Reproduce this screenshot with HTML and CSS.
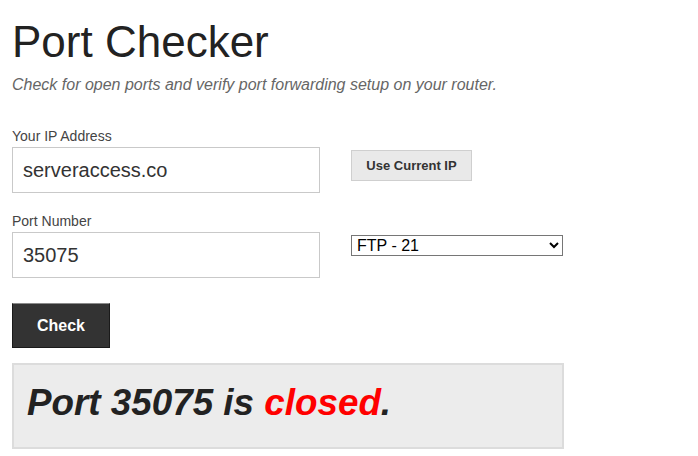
FILE: index.html
```html
<!DOCTYPE html>
<html lang="en">
<head>
<meta charset="utf-8">
<title>Port Checker</title>
<link rel="stylesheet" href="styles.css">
</head>
<body>
<main class="page">
  <h1 class="title">Port Checker</h1>
  <p class="subtitle">Check for open ports and verify port forwarding setup on your router.</p>

  <form class="form">
    <div class="row">
      <div class="field">
        <label class="label" for="ip">Your IP Address</label>
        <input class="text-input" id="ip" type="text" value="serveraccess.co">
      </div>
      <div class="side">
        <button type="button" class="btn-light">Use Current IP</button>
      </div>
    </div>
    <div class="row">
      <div class="field">
        <label class="label" for="port">Port Number</label>
        <input class="text-input" id="port" type="text" value="35075">
      </div>
      <div class="side">
        <select class="select">
          <option>FTP - 21</option>
          <option>SSH - 22</option>
          <option>HTTP - 80</option>
        </select>
      </div>
    </div>
    <button type="button" class="btn-dark">Check</button>
  </form>

  <div class="result">
    <h2 class="result-text">Port 35075 is <span class="closed">closed</span>.</h2>
  </div>
</main>
</body>
</html>
```
FILE: styles.css
```css
* { box-sizing: border-box; }

html, body {
  margin: 0;
  padding: 0;
  background: #fff;
}

body {
  font-family: "Liberation Sans", Arial, sans-serif;
  color: #222;
}

.page {
  padding: 17px 12px 0 12px;
}

.title {
  margin: 0;
  font-size: 44px;
  font-weight: normal;
  line-height: 50.6px;
  color: #222;
}

.subtitle {
  margin: 8px 0 0 0;
  font-size: 16px;
  line-height: 18.4px;
  font-style: italic;
  color: #666;
}

.form {
  margin-top: 34px;
  display: flex;
  flex-direction: column;
  align-items: flex-start;
}

.row {
  display: flex;
  align-items: flex-start;
  gap: 31px;
  margin-bottom: 20px;
}

.row + .row {
  margin-bottom: 25px;
}

.field {
  display: flex;
  flex-direction: column;
  gap: 3px;
  width: 308px;
}

.label {
  font-size: 14px;
  line-height: 16px;
  color: #444;
}

.text-input {
  width: 308px;
  height: 46px;
  margin: 0;
  padding: 0 10px;
  border: 1px solid #c9c9c9;
  border-radius: 0;
  font-family: "Liberation Sans", Arial, sans-serif;
  font-size: 20px;
  color: #333;
  background: #fff;
  outline: none;
}

.side {
  padding-top: 22px;
}

.btn-light {
  width: 121px;
  height: 31px;
  margin: 0;
  padding: 0;
  border: 1px solid #cfcfcf;
  border-radius: 0;
  background: #e9e9e9;
  font-family: "Liberation Sans", Arial, sans-serif;
  font-size: 13px;
  font-weight: bold;
  color: #333;
}

.select {
  width: 212px;
  height: 21px;
  margin: 0;
  padding: 0 0 0 1px;
  border: 1px solid #767676;
  border-radius: 0;
  background: #fff;
  font-family: "Liberation Sans", Arial, sans-serif;
  font-size: 16px;
  color: #000;
}

.btn-dark {
  width: 98px;
  height: 45px;
  margin: 0;
  padding: 0;
  border: 1px solid #1a1a1a;
  border-top-color: #8a8a8a;
  border-radius: 0;
  background: #333;
  font-family: "Liberation Sans", Arial, sans-serif;
  font-size: 16px;
  font-weight: bold;
  color: #fff;
}

.result {
  margin-top: 15px;
  width: 552px;
  height: 86px;
  padding: 17px 12px 0 13px;
  background: #ececec;
  border: 2px solid #dcdcdc;
}

.result-text {
  margin: 0;
  font-size: 36.8px;
  line-height: 42px;
  font-weight: bold;
  font-style: italic;
  color: #222;
}

.closed {
  color: #ff0000;
}
```
